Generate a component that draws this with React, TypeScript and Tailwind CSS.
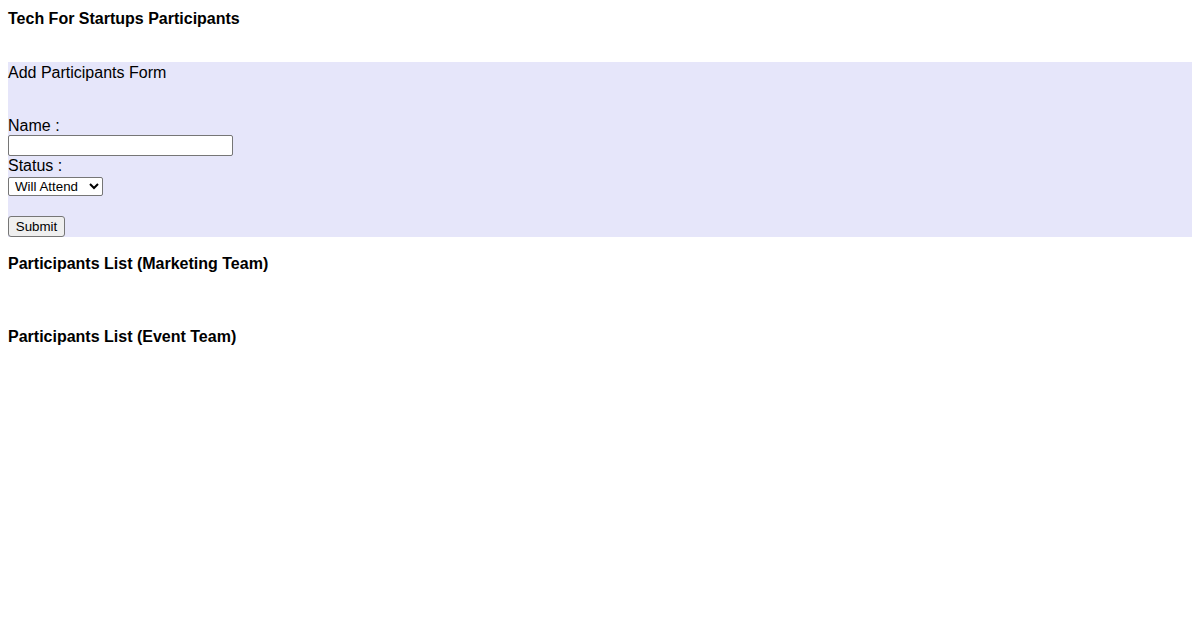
export default function App() {
  return (
    <div className="min-h-screen bg-white p-2 text-black text-[16px] leading-[18px] font-['Liberation_Sans',Arial,sans-serif]">
      <h4 className="pt-[2px] font-bold">Tech For Startups Participants</h4>

      <form className="mt-[34px] bg-[#e6e6fa] flex flex-col items-start">
        <p className="pt-[2px]">Add Participants Form</p>
        <label className="mt-[35px]">Name :</label>
        <input
          type="text"
          className="w-[225px] h-[21px] bg-white border border-[#767676] rounded-[2px] px-[2px] text-[13.33px]"
        />
        <label className="mt-[1px]">Status :</label>
        <select className="mt-[2px] h-[19px] w-[95px] bg-white border border-[#767676] rounded-[2px] text-[13.33px] leading-[15px] pl-[2px]">
          <option>Will Attend</option>
          <option>Will Not Attend</option>
        </select>
        <button
          type="button"
          className="mt-[20px] h-[21px] w-[57px] bg-[#efefef] border border-[#767676] rounded-[3px] text-[13.33px] leading-[15px]"
        >
          Submit
        </button>
      </form>

      <h4 className="mt-[17px] pt-[1px] font-bold">Participants List (Marketing Team)</h4>
      <ul className="h-[55px]" />
      <h4 className="font-bold">Participants List (Event Team)</h4>
      <ul />
    </div>
  );
}
